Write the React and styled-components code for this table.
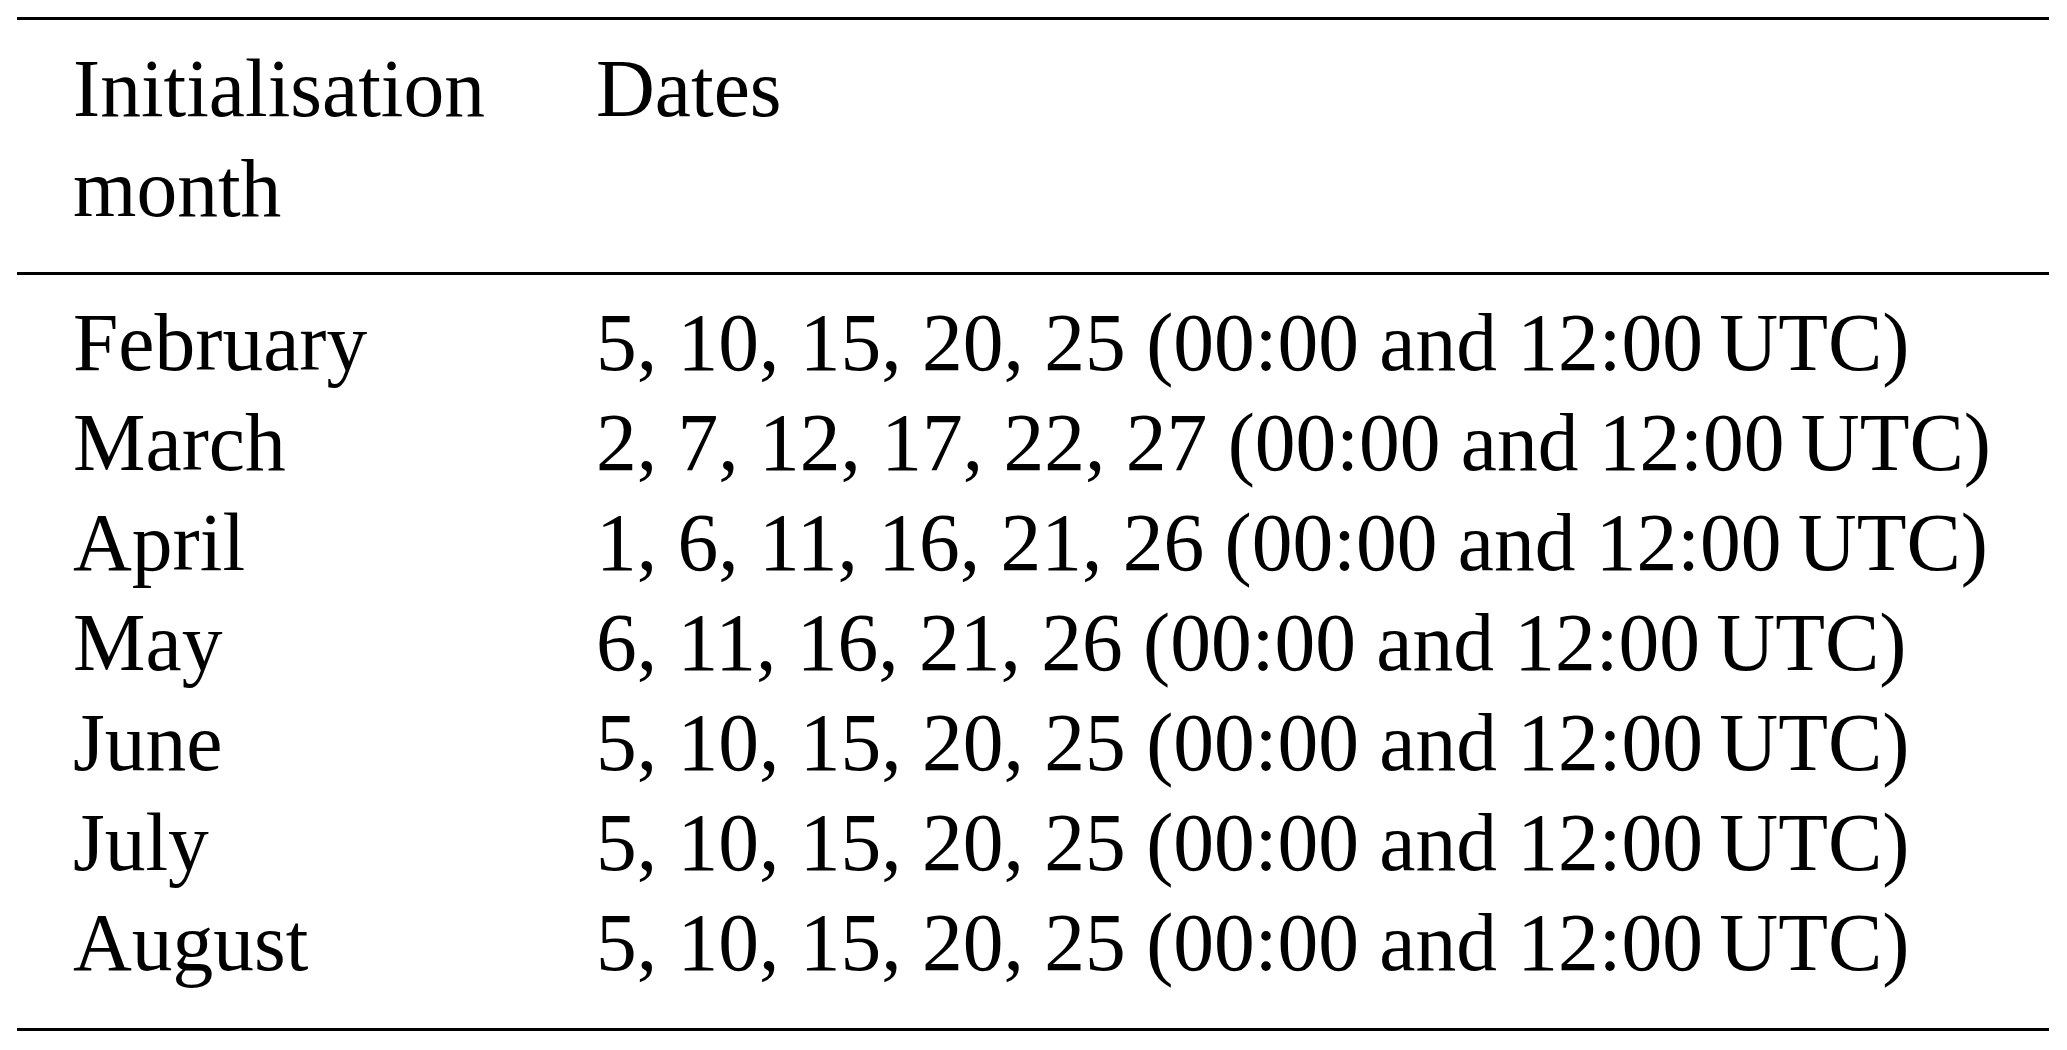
import React from "react";
import styled, { createGlobalStyle } from "styled-components";

const rows = [
  { month: "February", dates: "5, 10, 15, 20, 25" },
  { month: "March", dates: "2, 7, 12, 17, 22, 27" },
  { month: "April", dates: "1, 6, 11, 16, 21, 26" },
  { month: "May", dates: "6, 11, 16, 21, 26" },
  { month: "June", dates: "5, 10, 15, 20, 25" },
  { month: "July", dates: "5, 10, 15, 20, 25" },
  { month: "August", dates: "5, 10, 15, 20, 25" }
];

const App = () => (
  <Page>
    <GlobalStyle />
    <Table>
      <HeadRow>
        <Cell>Initialisation month</Cell>
        <Cell>Dates</Cell>
      </HeadRow>
      <Body>
        {rows.map(row => (
          <Row key={row.month}>
            <Cell>{row.month}</Cell>
            <Cell>
              {row.dates} (00:00 and 12:00{"\u2009"}UTC)
            </Cell>
          </Row>
        ))}
      </Body>
    </Table>
  </Page>
);

export default App;

const GlobalStyle = createGlobalStyle`
  html, body {
    margin: 0;
    padding: 0;
    background: #fff;
  }
`;

const Page = styled.div`
  width: 2067px;
  height: 1050px;
  padding: 17px 0 0 17px;
  box-sizing: border-box;
  background: #fff;
  font-family: "Liberation Serif", "Times New Roman", serif;
  font-size: 81.5px;
  line-height: 100px;
  color: #000;
`;

const Table = styled.div`
  width: 2032px;
  border-top: 3px solid #000;
  border-bottom: 3px solid #000;
`;

const Grid = styled.div`
  display: grid;
  grid-template-columns: 523px 1fr;
  padding-left: 56px;
`;

const HeadRow = styled(Grid)`
  padding-top: 19px;
  padding-bottom: 33px;
  border-bottom: 3px solid #000;
`;

const Body = styled.div`
  padding: 18px 0 35px;
`;

const Row = styled(Grid)``;

const Cell = styled.div`
  white-space: pre-wrap;
`;
